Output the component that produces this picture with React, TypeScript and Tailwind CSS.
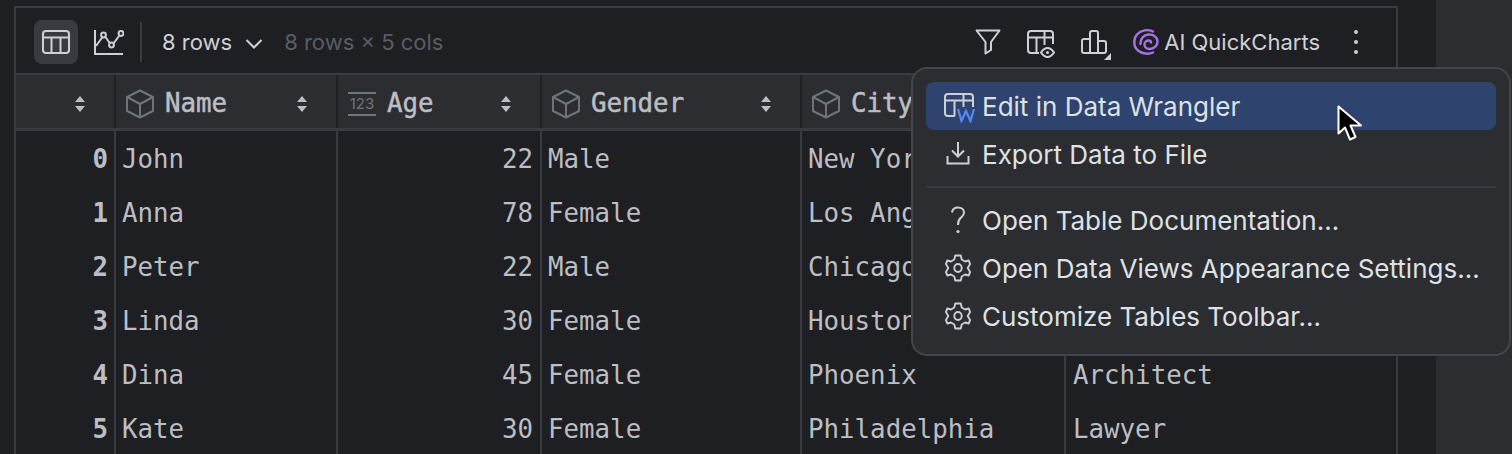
import React from "react";

const mono = "font-['DejaVu_Sans_Mono',monospace]";

type IconProps = { className?: string };

const TableIcon: React.FC<IconProps> = ({ className }) => (
  <svg width="28" height="24" viewBox="0 0 28 24" fill="none" stroke="currentColor" strokeWidth="2" className={className}>
    <rect x="1" y="1" width="26" height="22" rx="3" />
    <path d="M1 7.5H27M9.5 7.5V23M18.5 7.5V23" />
  </svg>
);

const ChartIcon: React.FC<IconProps> = ({ className }) => (
  <svg width="30" height="26" viewBox="0 0 30 26" fill="none" stroke="currentColor" strokeWidth="2" className={className}>
    <path d="M1 1V25H29" />
    <path d="M2 17L8.5 8M11.5 8L16 14.5M19.5 14.5L25 7" />
    <circle cx="9.5" cy="6" r="2.4" />
    <circle cx="17.5" cy="16" r="2.4" />
    <circle cx="27" cy="4.5" r="2.4" />
  </svg>
);

const FilterIcon: React.FC<IconProps> = ({ className }) => (
  <svg width="26" height="26" viewBox="0 0 26 26" fill="none" stroke="currentColor" strokeWidth="2" strokeLinejoin="round" className={className}>
    <path d="M1.5 1.5H24.5L16 13V21L10.5 24.5V13Z" />
  </svg>
);

const TableEyeIcon: React.FC<IconProps> = ({ className }) => (
  <svg width="30" height="30" viewBox="0 0 30 30" fill="none" stroke="currentColor" strokeWidth="2" className={className}>
    <path d="M12 23H4a3 3 0 0 1-3-3V4a3 3 0 0 1 3-3h19a3 3 0 0 1 3 3v10" />
    <path d="M1 7.5H26M9.5 7.5V23M17.5 1V15" />
    <path d="M14 22.5C16 19.5 18.2 18 20.5 18S25 19.5 27 22.5C25 25.5 22.8 27 20.5 27S16 25.5 14 22.5Z" />
    <circle cx="20.5" cy="22.5" r="1.6" fill="currentColor" stroke="none" />
  </svg>
);

const BarsIcon: React.FC<IconProps> = ({ className }) => (
  <svg width="30" height="30" viewBox="0 0 30 30" fill="none" stroke="currentColor" strokeWidth="2" className={className}>
    <path d="M3 9H9V23H3a2 2 0 0 1-2-2V11a2 2 0 0 1 2-2Z" />
    <path d="M9 3a2 2 0 0 1 2-2H15a2 2 0 0 1 2 2V23H9Z" />
    <path d="M17 11H23a2 2 0 0 1 2 2V21a2 2 0 0 1-2 2H17Z" />
    <path d="M30 23V30H23Z" fill="currentColor" stroke="none" />
  </svg>
);

const SpiralIcon: React.FC<IconProps> = ({ className }) => (
  <svg width="26" height="26" viewBox="0 0 26 26" fill="none" stroke="#a571e6" strokeWidth="2.4" strokeLinecap="round" className={className}>
    <path d="M20 2.5C15 0 8 1 4 5.5C0 10 .5 18 5 21.5C9 25 16 25.5 20 23.5" />
    <path d="M7.5 15C7 9.5 11 6 15.5 5.5C20 5 24 8 24.5 12C25 16.5 21 20 16.5 20C13.5 20 11.5 18 11.5 15.5C11.5 13 13.5 11.5 15.5 11.5C17 11.5 18 12.5 18 13.5" />
  </svg>
);

const CubeIcon: React.FC<IconProps> = ({ className }) => (
  <svg width="30" height="30" viewBox="0 0 30 30" fill="none" stroke="currentColor" strokeWidth="2" strokeLinejoin="round" className={className}>
    <path d="M15 1.5L28 8V22L15 28.5L2 22V8Z" />
    <path d="M2 8L15 15L28 8M15 15V28.5" />
  </svg>
);

const NumIcon: React.FC<IconProps> = ({ className }) => (
  <span className={`flex h-[24px] w-[28px] flex-col justify-center border-y-2 border-[#6f737a] text-center font-['Inter',sans-serif] text-[15px] font-normal leading-none text-[#6f737a] [-webkit-text-stroke:0] ${className ?? ""}`}>
    123
  </span>
);

const SortIcon: React.FC<IconProps> = ({ className }) => (
  <svg width="10" height="16" viewBox="0 0 10 16" fill="currentColor" className={className}>
    <path d="M5 0L10 6H0Z" />
    <path d="M5 16L0 10H10Z" />
  </svg>
);

const WranglerIcon: React.FC<IconProps> = ({ className }) => (
  <svg width="32" height="30" viewBox="0 0 32 30" fill="none" strokeWidth="2" className={className}>
    <g stroke="#ced0d6">
      <path d="M11 23H4a3 3 0 0 1-3-3V4a3 3 0 0 1 3-3h22a3 3 0 0 1 3 3v10" />
      <path d="M1 7.5H29M10.5 7.5V23M19.5 1V14" />
    </g>
    <path d="M14 16L17.5 28L22 18L26.5 28L30 16" stroke="#548af7" strokeWidth="2.2" />
  </svg>
);

const ExportIcon: React.FC<IconProps> = ({ className }) => (
  <svg width="24" height="24" viewBox="0 0 24 24" fill="none" stroke="currentColor" strokeWidth="2" className={className}>
    <path d="M12 1V15M6 9.5L12 15.5L18 9.5" />
    <path d="M1.5 15V22.5H22.5V15" />
  </svg>
);

const HelpIcon: React.FC<IconProps> = ({ className }) => (
  <svg width="16" height="28" viewBox="0 0 16 28" fill="none" stroke="currentColor" strokeWidth="2" className={className}>
    <path d="M2 6.5C2.5 3 5 1.5 8 1.5C11.5 1.5 14 3.5 14 6.5C14 9.5 12 10.5 10.5 12C9 13.5 8 15 8 19" />
    <circle cx="8" cy="25.5" r="1.6" fill="currentColor" stroke="none" />
  </svg>
);

const GearIcon: React.FC<IconProps> = ({ className }) => (
  <svg width="26" height="28" viewBox="0 0 28 28" preserveAspectRatio="none" fill="none" stroke="currentColor" strokeWidth="2" strokeLinejoin="round" className={className}>
    <path d="M11 1.5H17L18 5.5L21.5 7.5L25.5 6.5L27 10L24.5 14L27 18L25.5 21.5L21.5 20.5L18 22.5L17 26.5H11L10 22.5L6.5 20.5L2.5 21.5L1 18L3.5 14L1 10L2.5 6.5L6.5 7.5L10 5.5Z" />
    <circle cx="14" cy="14" r="4" />
  </svg>
);

const columns = [
  { name: "Name", icon: "cube" },
  { name: "Age", icon: "num" },
  { name: "Gender", icon: "cube" },
  { name: "City", icon: "cube" },
];

const rows = [
  ["John", "22", "Male", "New York", ""],
  ["Anna", "78", "Female", "Los Angeles", ""],
  ["Peter", "22", "Male", "Chicago", ""],
  ["Linda", "30", "Female", "Houston", ""],
  ["Dina", "45", "Female", "Phoenix", "Architect"],
  ["Kate", "30", "Female", "Philadelphia", "Lawyer"],
];

const gridCols = "grid grid-cols-[100px_222px_204px_260px_264px_330px]";

const Toolbar = () => (
  <div className="flex h-[67px] items-center justify-between border-b-2 border-[#393b40] pl-[18px] pr-[38px] pt-[3px] font-['Inter',sans-serif] text-[22px] text-[#ced0d6]">
    <div className="flex items-center">
      <div className="flex h-[44px] w-[44px] items-center justify-center rounded-lg bg-[#393b40]">
        <TableIcon />
      </div>
      <ChartIcon className="ml-[16px]" />
      <div className="ml-[16px] h-[40px] w-[2px] bg-[#393b40]" />
      <span className="ml-[20px]">8 rows</span>
      <svg width="18" height="10" viewBox="0 0 18 10" fill="none" stroke="currentColor" strokeWidth="2" className="ml-[13px] mt-[3px]">
        <path d="M1.5 1L9 8.5L16.5 1" />
      </svg>
      <span className="ml-[21px] text-[#5a5d63]">8 rows × 5 cols</span>
    </div>
    <div className="flex items-center">
      <FilterIcon />
      <TableEyeIcon className="ml-[26px] mt-[6px]" />
      <BarsIcon className="ml-[24px] mt-[6px]" />
      <SpiralIcon className="ml-[22px]" />
      <span className="ml-[5px]">AI QuickCharts</span>
      <div className="ml-[34px] flex flex-col gap-[6px]">
        <div className="h-[4px] w-[4px] rounded-full bg-[#ced0d6]" />
        <div className="h-[4px] w-[4px] rounded-full bg-[#ced0d6]" />
        <div className="h-[4px] w-[4px] rounded-full bg-[#ced0d6]" />
      </div>
    </div>
  </div>
);

const DataTable = () => (
  <div className={`${mono} text-[25.8px] text-[#bcbec4]`}>
    <div className={`${gridCols} h-[56px] border-b-[3px] border-[#393b40] bg-[#2b2d30] [-webkit-text-stroke:0.5px_#bcbec4]`}>
      <div className="flex items-center justify-end border-r-2 border-[#1e1f22] pr-[29px] pt-[4px]">
        <SortIcon />
      </div>
      {columns.map((c) => (
        <div key={c.name} className="flex items-center overflow-hidden border-r-2 border-[#1e1f22] pl-[9px] pr-[29px] pt-[4px]">
          <span className="flex w-[30px] shrink-0 justify-center text-[#6f737a]">
            {c.icon === "cube" ? <CubeIcon /> : <NumIcon />}
          </span>
          <span className="ml-[10px]">{c.name}</span>
          <SortIcon className="ml-auto shrink-0" />
        </div>
      ))}
      <div />
    </div>
    {rows.map((r, i) => (
      <div key={r[0]} className={`${gridCols} h-[54px]`}>
        <div className="flex items-center justify-end border-r-2 border-[#393b40] pr-[6px] pt-[2px] font-bold">{i}</div>
        {r.map((v, j) => (
          <div key={j} className={`flex items-center pt-[2px] ${j === 1 ? "justify-end pr-[7px]" : "pl-[6px]"} ${j === 4 ? "pl-[7px]" : "border-r-2 border-[#393b40]"}`}>
            {v}
          </div>
        ))}
      </div>
    ))}
  </div>
);

const MenuItem: React.FC<{ icon: React.ReactNode; label: string; active?: boolean }> = ({ icon, label, active }) => (
  <div className={`flex h-[48px] items-center rounded-lg ${active ? "bg-[#2e436e]" : ""}`}>
    <span className="flex w-[56px] shrink-0 justify-center pl-[8px] text-[#ced0d6]">{icon}</span>
    <span className="pt-[1px]">{label}</span>
  </div>
);

const PopupMenu = () => (
  <div className="absolute left-[911px] top-[67px] w-[600px] rounded-2xl border-2 border-[#43454a] bg-[#2b2d30] px-[13px] pb-[14px] pt-[13px] font-['Inter',sans-serif] text-[26px] text-[#dfe1e5]">
    <MenuItem active icon={<WranglerIcon className="ml-[4px] mt-[3px]" />} label="Edit in Data Wrangler" />
    <MenuItem icon={<ExportIcon className="-mt-[2px]" />} label="Export Data to File" />
    <div className="my-[8px] h-[2px] bg-[#393b40]" />
    <MenuItem icon={<HelpIcon />} label="Open Table Documentation..." />
    <MenuItem icon={<GearIcon />} label="Open Data Views Appearance Settings..." />
    <MenuItem icon={<GearIcon />} label="Customize Tables Toolbar..." />
  </div>
);

const Cursor = () => (
  <svg width="28" height="38" viewBox="0 0 28 38" className="absolute left-[1336px] top-[104px]">
    <path d="M2.5 2.5V29.5L9 23.5L14 35.5L19.5 33L14.5 21.5H25Z" fill="#000" stroke="#fff" strokeWidth="2" strokeLinejoin="round" />
  </svg>
);

export default function App() {
  return (
    <div className="relative flex h-[454px] w-[1512px] overflow-hidden bg-[#1e1f22]">
      <div className="h-full w-[1436px] pl-[14px] pt-[6px]">
        <div className="h-[460px] w-[1384px] border-x-2 border-t-2 border-[#393b40]">
          <Toolbar />
          <DataTable />
        </div>
      </div>
      <div className="h-full flex-1 bg-[#2b2d30]" />
      <PopupMenu />
      <Cursor />
    </div>
  );
}
